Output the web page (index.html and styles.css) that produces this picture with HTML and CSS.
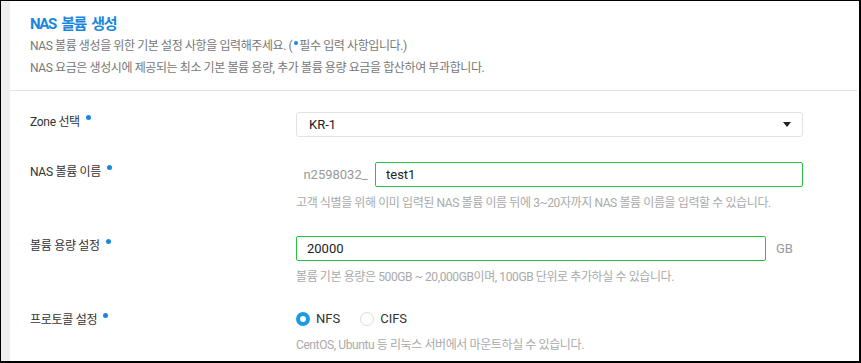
FILE: index.html
```html
<html>
<head>
    <meta charset="utf-8">
    <title>NAS 볼륨 생성</title>
    <link rel="stylesheet" href="styles.css">
</head>
<body>

<div class="frame">
    <div class="side"></div>
    <div class="main">

        <div class="head">
            <h1 class="title">NAS 볼륨 생성</h1>
            <p class="desc">NAS 볼륨 생성을 위한 기본 설정 사항을 입력해주세요. (<span class="dot"></span>필수 입력 사항입니다.)</p>
            <p class="desc">NAS 요금은 생성시에 제공되는 최소 기본 볼륨 용량, 추가 볼륨 용량 요금을 합산하여 부과합니다.</p>
        </div>

        <div class="form">
            <div class="row">
                <div class="label">Zone 선택<span class="req"></span></div>
                <div class="field">
                    <div class="select">
                        <span>KR-1</span>
                        <span class="caret"></span>
                    </div>
                </div>
            </div>

            <div class="row">
                <div class="label">NAS 볼륨 이름<span class="req"></span></div>
                <div class="field">
                    <div class="line">
                        <span class="prefix">n2598032_</span>
                        <input class="text ok name" type="text" value="test1">
                    </div>
                    <div class="help">고객 식별을 위해 이미 입력된 NAS 볼륨 이름 뒤에 3~20자까지 NAS 볼륨 이름을 입력할 수 있습니다.</div>
                </div>
            </div>

            <div class="row">
                <div class="label">볼륨 용량 설정<span class="req"></span></div>
                <div class="field">
                    <div class="line">
                        <input class="text ok size" type="text" value="20000">
                        <span class="unit">GB</span>
                    </div>
                    <div class="help">볼륨 기본 용량은 500GB ~ 20,000GB이며, 100GB 단위로 추가하실 수 있습니다.</div>
                </div>
            </div>

            <div class="row">
                <div class="label">프로토콜 설정<span class="req"></span></div>
                <div class="field">
                    <div class="radios">
                        <label class="radio"><span class="circle on"></span>NFS</label>
                        <label class="radio"><span class="circle"></span>CIFS</label>
                    </div>
                    <div class="help">CentOS, Ubuntu 등 리눅스 서버에서 마운트하실 수 있습니다.</div>
                </div>
            </div>
        </div>

    </div>
</div>

</body>
</html>
```

FILE: styles.css
```css
body { margin: 0; font-family: Roboto, "Noto Sans CJK KR", sans-serif; }

.frame
{
    width: 861px;
    height: 363px;
    box-sizing: border-box;
    border-top: 1px solid #000;
    border-left: 1px solid #000;
    border-right: 2px solid #000;
    border-bottom: 2px solid #000;
    display: flex;
    overflow: hidden;
    background: #fff;
}
.side { width: 9px; background: #efefef; flex: none; }
.main { flex: 1; }

.head
{
    margin-right: 2px;
    padding: 13px 20px 11px 20px;
    border-bottom: 1px solid #e2e2e2;
}
.title
{
    margin: 0;
    font-size: 15px;
    line-height: 21px;
    font-weight: bold;
    letter-spacing: -1.4px;
    word-spacing: 3px;
    color: #1b86e0;
}
.desc { margin: 0; font-size: 12px; line-height: 22px; letter-spacing: -0.4px; color: #777; }
.dot
{
    display: inline-block;
    width: 4px;
    height: 4px;
    border-radius: 50%;
    background: #1b86e0;
    vertical-align: 5px;
    margin: 0 1px 0 2px;
}

.form { padding: 21px 20px 0 20px; }
.row { display: flex; margin-bottom: 25px; }
.label
{
    width: 266px;
    flex: none;
    font-size: 12px;
    line-height: 18px;
    padding-top: 1px;
    letter-spacing: -0.3px;
    color: #333;
}
.req
{
    display: inline-block;
    width: 5px;
    height: 5px;
    border-radius: 50%;
    background: #1b86e0;
    margin-left: 6px;
    vertical-align: 6px;
}
.field { width: 507px; }

.select
{
    height: 25px;
    box-sizing: border-box;
    border: 1px solid #e2e2e2;
    border-radius: 3px;
    display: flex;
    align-items: center;
    justify-content: space-between;
    padding: 0 11px 0 12px;
    font-size: 13px;
    color: #222;
}
.caret
{
    width: 0;
    height: 0;
    border-left: 4px solid transparent;
    border-right: 4px solid transparent;
    border-top: 5px solid #222;
}

.line { display: flex; align-items: center; }
.prefix { width: 79px; text-align: center; font-size: 13px; color: #999; flex: none; }
.text
{
    height: 25px;
    box-sizing: border-box;
    border: 1px solid #e2e2e2;
    border-radius: 2px;
    padding: 0 10px;
    font-family: Roboto, "Noto Sans CJK KR", sans-serif;
    font-size: 13px;
    color: #222;
    outline: none;
}
.text.ok { border-color: #2ac33f; }
.name { width: 428px; }
.size { width: 470px; }
.unit { width: 37px; text-align: center; font-size: 13px; color: #999; }

.help { margin-top: 8px; font-size: 12px; line-height: 16px; letter-spacing: -0.4px; color: #aaa; }

.radios { display: flex; align-items: center; height: 25px; font-size: 13px; color: #333; margin: -4px 0 -2px 0; }
.radio { display: flex; align-items: center; margin-right: 20px; }
.circle
{
    width: 14px;
    height: 14px;
    box-sizing: border-box;
    border-radius: 50%;
    border: 1px solid #ddd;
    background: #fff;
    margin-right: 6px;
}
.circle.on { border: 4px solid #1a9be6; }
```
